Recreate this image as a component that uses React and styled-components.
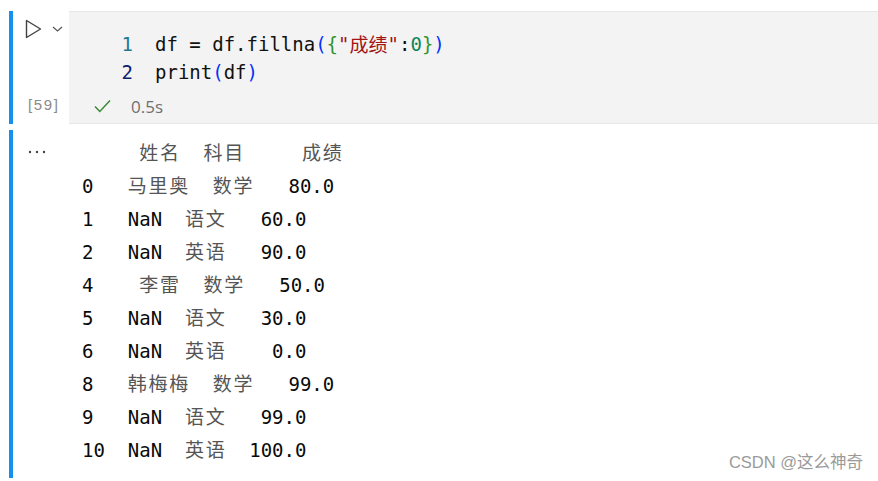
import styled, { createGlobalStyle } from "styled-components";

const GlobalStyle = createGlobalStyle`
  html, body {
    margin: 0;
    padding: 0;
    background: #ffffff;
  }
  body {
    font-family: "Liberation Sans", "Noto Sans CJK SC", sans-serif;
  }
`;

const MONO = `"DejaVu Sans Mono", "Liberation Mono", "Noto Sans CJK SC", monospace`;
const CJK = `"Noto Sans CJK SC", sans-serif`;

const Page = styled.div`
  position: relative;
  width: 878px;
  height: 481px;
  overflow: hidden;
  padding-top: 11px;
  box-sizing: border-box;
`;

const Cell = styled.div`
  display: flex;
  margin-left: 9px;
  margin-top: ${(p) => p.gap || 0}px;
  border-left: 4px solid #1590ee;
  height: ${(p) => p.height}px;
`;

const Gutter = styled.div`
  width: ${(p) => p.width}px;
  flex-shrink: 0;
  display: flex;
  flex-direction: column;
  justify-content: space-between;
  box-sizing: border-box;
  padding: ${(p) => p.pad};
`;

const RunRow = styled.div`
  display: flex;
  align-items: center;
  gap: 10px;
  padding-left: 12px;
`;

const ExecCount = styled.div`
  font-family: "Liberation Sans", sans-serif;
  font-size: 15px;
  color: #8a8a8a;
  padding-left: 15px;
  letter-spacing: 1.6px;
  height: 24px;
  line-height: 24px;
`;

const CodeBox = styled.div`
  flex: 1;
  display: flex;
  flex-direction: column;
  background: #f3f3f3;
  border-top: 1px solid #e6e6e6;
  border-bottom: 1px solid #e6e6e6;
  padding-top: 18px;
  box-sizing: border-box;
`;

const CodeLine = styled.div`
  display: flex;
  font-family: ${MONO};
  font-size: 19px;
  line-height: 28px;
  height: 28px;
  white-space: pre;
  color: #111111;
`;

const LineNo = styled.span`
  width: 64px;
  text-align: right;
  margin-right: 22px;
  color: ${(p) => (p.active ? "#0b216f" : "#237893")};
`;

const Tok = styled.span`
  color: ${(p) => p.c || "inherit"};
`;

const Han = styled.span`
  font-family: ${CJK};
  letter-spacing: ${(p) => p.spacing || 0}px;
  color: ${(p) => p.c || "inherit"};
`;

const Status = styled.div`
  display: flex;
  align-items: center;
  gap: 20px;
  margin-top: 8px;
  padding-left: 25px;
  height: 24px;
  font-family: "Open Sans", "Liberation Sans", sans-serif;
  font-size: 17px;
  color: #6f6f6f;
`;

const Output = styled.div`
  padding-top: 5px;
  font-family: ${MONO};
  font-size: 19px;
  color: #0a0a0a;
`;

const OutLine = styled.div`
  height: 33px;
  line-height: 33px;
  white-space: pre;
`;

const Dots = styled.div`
  display: flex;
  padding: 20px 0 0 15px;
`;

const Watermark = styled.div`
  position: absolute;
  right: 15px;
  bottom: 8px;
  font-family: "Liberation Sans", "Noto Sans CJK SC", sans-serif;
  font-size: 16.5px;
  color: #9a9a9a;
`;

const isHan = (ch) => /[\u3400-\u9fff]/.test(ch);

// split a string into runs of CJK / non-CJK so the CJK can get its own font
const renderText = (str) => {
  const runs = [];
  let cur = "";
  let curHan = null;
  for (const ch of str) {
    const h = isHan(ch);
    if (curHan !== null && h !== curHan) {
      runs.push({ text: cur, han: curHan });
      cur = "";
    }
    cur += ch;
    curHan = h;
  }
  if (cur) runs.push({ text: cur, han: curHan });
  return runs.map((r, i) =>
    r.han ? (
      <Han key={i} spacing={1.7} c="#555555">
        {r.text}
      </Han>
    ) : (
      <span key={i}>{r.text}</span>
    )
  );
};

const rows = [
  ["0", "马里奥", "数学", "80.0"],
  ["1", "NaN", "语文", "60.0"],
  ["2", "NaN", "英语", "90.0"],
  ["4", "李雷", "数学", "50.0"],
  ["5", "NaN", "语文", "30.0"],
  ["6", "NaN", "英语", "0.0"],
  ["8", "韩梅梅", "数学", "99.0"],
  ["9", "NaN", "语文", "99.0"],
  ["10", "NaN", "英语", "100.0"],
];

const formatRow = ([idx, name, subj, score]) =>
  `${idx.padEnd(2)}  ${name.padStart(3)}  ${subj}  ${score.padStart(5)}`;

const PlayIcon = () => (
  <svg width="17" height="20" viewBox="0 0 17 20">
    <path d="M1.5 1.5 L1.5 18.5 L15.5 10 Z" fill="none" stroke="#424242" strokeWidth="1.4" strokeLinejoin="round" />
  </svg>
);

const Chevron = () => (
  <svg width="11" height="8" viewBox="0 0 11 8">
    <path d="M1 2 L5.5 6 L10 2" fill="none" stroke="#555" strokeWidth="1.2" />
  </svg>
);

const Check = () => (
  <svg width="17" height="14" viewBox="0 0 17 14">
    <path d="M1 7.5 L5.8 12.5 L16 1.5" fill="none" stroke="#388a34" strokeWidth="1.5" />
  </svg>
);

const Ellipsis = () => (
  <svg width="20" height="4" viewBox="0 0 20 4">
    <circle cx="2" cy="2" r="1.2" fill="#444" />
    <circle cx="9" cy="2" r="1.2" fill="#444" />
    <circle cx="16" cy="2" r="1.2" fill="#444" />
  </svg>
);

export default function App() {
  return (
    <>
      <GlobalStyle />
      <Page>
        <Cell height={113}>
          <Gutter width={56} pad="8px 0 7px 0">
            <RunRow>
              <PlayIcon />
              <Chevron />
            </RunRow>
            <ExecCount>[59]</ExecCount>
          </Gutter>
          <CodeBox>
            <CodeLine>
              <LineNo>1</LineNo>
              <span>df = df.fillna</span>
              <Tok c="#0431fa">(</Tok>
              <Tok c="#319331">{"{"}</Tok>
              <Tok c="#a31515">"</Tok>
              <Han c="#a31515">成绩</Han>
              <Tok c="#a31515">"</Tok>
              <span>:</span>
              <Tok c="#098658">0</Tok>
              <Tok c="#319331">{"}"}</Tok>
              <Tok c="#0431fa">)</Tok>
            </CodeLine>
            <CodeLine>
              <LineNo active>2</LineNo>
              <span>print</span>
              <Tok c="#0431fa">(</Tok>
              <span>df</span>
              <Tok c="#0431fa">)</Tok>
            </CodeLine>
            <Status>
              <Check />
              <span>0.5s</span>
            </Status>
          </CodeBox>
        </Cell>
        <Cell height={348} gap={6}>
          <Gutter width={69} pad="0">
            <Dots>
              <Ellipsis />
            </Dots>
          </Gutter>
          <Output>
            <OutLine>{renderText("     姓名  科目     成绩")}</OutLine>
            {rows.map((r) => (
              <OutLine key={r[0]}>{renderText(formatRow(r))}</OutLine>
            ))}
          </Output>
        </Cell>
        <Watermark>CSDN @这么神奇</Watermark>
      </Page>
    </>
  );
}
